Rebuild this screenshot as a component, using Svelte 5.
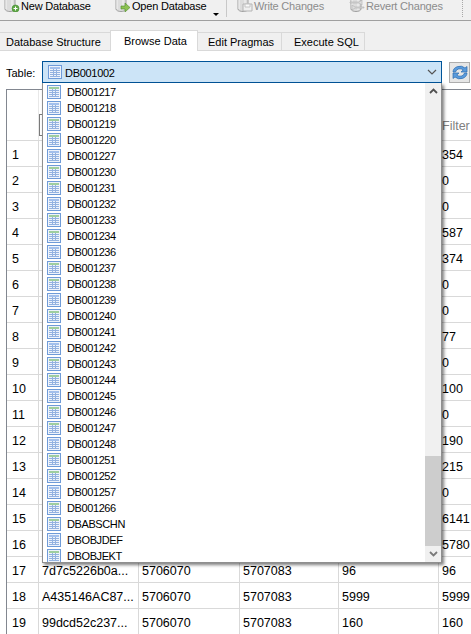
<script>
  const tables = ['DB001217','DB001218','DB001219','DB001220','DB001227','DB001230','DB001231','DB001232','DB001233','DB001234','DB001236','DB001237','DB001238','DB001239','DB001240','DB001241','DB001242','DB001243','DB001244','DB001245','DB001246','DB001247','DB001248','DB001251','DB001252','DB001257','DB001266','DBABSCHN','DBOBJDEF','DBOBJEKT'];
  const lastCol = ['354','0','0','587','374','0','0','77','0','100','0','190','215','0','6141','5780','96','5999','160'];
  const rows = lastCol.map((v, i) => {
    const tail = { 16: ['7d7c5226b0a...', '96'], 17: ['A435146AC87...', '5999'], 18: ['99dcd52c237...', '160'] }[i];
    return { n: i + 1, hash: tail ? tail[0] : '', a: tail ? '5706070' : '', b: tail ? '5707083' : '', c: tail ? tail[1] : '', d: v };
  });
  const tabs = ['Database Structure', 'Browse Data', 'Edit Pragmas', 'Execute SQL'];
</script>

{#snippet tableIcon(green)}
  <svg class="ticon" width="16" height="16" viewBox="0 0 16 16">
    <rect x="1.5" y="1.5" width="13" height="13" fill="#eef3fb" stroke="#6f9bd8"/>
    <rect x="3" y="3" width="10" height="2" fill={green ? '#9fce9f' : '#a3c0ec'}/>
    <path d="M3 6.500h10M3 8.500h10M3 10.500h10M3 12.500h10M6.500 5v8M9.500 5v8" stroke="#93b2e0" fill="none"/>
  </svg>
{/snippet}

{#snippet dbBody(x)}
  <path d="M{x} 3v10c0 1.500 2.500 2.500 5 2.500s5-1 5-2.500V3z" fill="#dcdcdc" stroke="#a0a0a0"/>
  <path d="M{x + 1} 4v9M{x + 7} 4v10" stroke="#f4f4f4"/>
{/snippet}

<div class="app">
  <div class="toolbar">
    <div class="tool new">
      <svg width="16" height="16" viewBox="0 0 16 16">
        {@render dbBody(1)}
        <circle cx="11.500" cy="12.500" r="3.500" fill="#5fa845" stroke="#3f8a2c" stroke-width=".6"/>
        <path d="M9.500 12.500h4M11.500 10.500v4" stroke="#fff"/>
      </svg>
      <span>New Database</span>
    </div>
    <div class="tool open">
      <svg width="16" height="16" viewBox="0 0 16 16">
        {@render dbBody(1)}
        <path d="M6 10h4V7l5 4.500L10 16v-3H6z" fill="#8cc152" stroke="#4f8a2c" stroke-width=".6"/>
      </svg>
      <span>Open Database</span>
      <i class="caret"></i>
    </div>
    <div class="sep"></div>
    <div class="tool off write">
      <svg width="16" height="16" viewBox="0 0 16 16">
        {@render dbBody(1)}
        <path d="M6 8h9v7H6z" fill="#efefef" stroke="#b4b4b4"/>
        <path d="M8 8h5v3H8z" fill="#fafafa" stroke="#c4c4c4"/>
      </svg>
      <span>Write Changes</span>
    </div>
    <div class="tool off revert">
      <svg width="16" height="16" viewBox="0 0 16 16">
        {@render dbBody(2)}
        <path d="M1 6h9l3-2v5l-3-2H1zM15 11H6l-3-2v5l3-2h9z" fill="#dedede" stroke="#b0b0b0" stroke-width=".6"/>
      </svg>
      <span>Revert Changes</span>
    </div>
    <div class="grip"></div>
  </div>

  <div class="tabs">
    {#each tabs as tab, i}
      <div class="tab" class:active={i === 1}>{tab}</div>
    {/each}
  </div>

  <div class="page">
    <div class="table-row">
      <span class="label">Table:</span>
      <div class="combo-wrap">
        <div class="combo">
          {@render tableIcon(false)}
          <span class="combo-text">DB001002</span>
          <svg class="chev" width="10" height="6" viewBox="0 0 10 6"><path d="M1 1l4 4 4-4" fill="none" stroke="#555" stroke-width="1.200"/></svg>
        </div>
        <div class="popup">
          <div class="list">
            {#each tables as t, i}
              <div class="item">
                {@render tableIcon(i % 3 !== 1)}
                <span>{t}</span>
              </div>
            {/each}
          </div>
          <div class="scroll">
            <svg class="arrow" width="9" height="6" viewBox="0 0 9 6"><path d="M1 5l3.500-3.500L8 5" fill="none" stroke="#505050" stroke-width="1.800"/></svg>
            <div class="track"><div class="thumb"></div></div>
            <svg class="arrow" width="9" height="6" viewBox="0 0 9 6"><path d="M1 1l3.500 3.500L8 1" fill="none" stroke="#7a7a7a" stroke-width="1.800"/></svg>
          </div>
        </div>
      </div>
      <button class="refresh" aria-label="Refresh">
        <svg width="18" height="19" viewBox="0 0 18 19">
          <path d="M2 9a7 6 0 0 1 12-4l2-1.500V9h-6l2.200-2A4.500 4 0 0 0 4.500 9z" fill="#5b9bdc" stroke="#2b6cb0" stroke-width=".7"/>
          <path d="M16 10a7 6 0 0 1-12 4l-2 1.500V10h6l-2.200 2a4.500 4 0 0 0 7.700-2z" fill="#5b9bdc" stroke="#2b6cb0" stroke-width=".7"/>
        </svg>
      </button>
    </div>

    <div class="grid-frame">
      <div class="head">
        <div class="corner"></div>
        <div class="hcell"><div class="filter-box"></div></div>
        <div class="hcell"></div>
        <div class="hcell"></div>
        <div class="hcell"></div>
        <div class="hcell last"><span class="filter">Filter</span></div>
      </div>
      {#each rows as r}
        <div class="row">
          <div class="num">{r.n}</div>
          <div class="cell">{r.hash}</div>
          <div class="cell">{r.a}</div>
          <div class="cell">{r.b}</div>
          <div class="cell">{r.c}</div>
          <div class="cell">{r.d}</div>
        </div>
      {/each}
    </div>
  </div>
</div>

<style>
  :global(body) {
    margin: 0;
    background: #fff;
    overflow: hidden;
  }
  .app {
    width: 471px;
    height: 634px;
    overflow: hidden;
    font-family: "Liberation Sans", Arial, sans-serif;
    font-size: 11px;
    color: #000;
    background: #fff;
  }
  .toolbar {
    height: 20px;
    display: flex;
    align-items: flex-start;
    overflow: hidden;
    background: #f0f0f0;
    border-bottom: 1px solid #a0a0a0;
    padding-left: 4px;
    box-sizing: content-box;
  }
  .tool {
    display: flex;
    align-items: flex-start;
    gap: 1px;
    height: 20px;
    white-space: nowrap;
    letter-spacing: -0.200px;
  }
  .tool svg {
    margin-top: -4px;
    flex: none;
  }
  .tool span {
    line-height: 12px;
  }
  .new {
    width: 111px;
  }
  .open {
    width: 111px;
  }
  .write {
    width: 112px;
  }
  .revert {
    width: 110px;
  }
  .caret {
    width: 0;
    height: 0;
    border: 3px solid transparent;
    border-top: 3px solid #000;
    border-bottom: 0;
    margin: 13px 0 0 6px;
  }
  .sep {
    width: 1px;
    height: 17px;
    background: #c8c8c8;
    margin-right: 10px;
  }
  .off {
    color: #8c8c8c;
  }
  .grip {
    height: 17px;
    border-left: 1px dotted #a8a8a8;
    margin-left: 3px;
  }
  .tabs {
    display: flex;
    align-items: flex-end;
    height: 29px;
    background: #f0f0f0;
    border-bottom: 1px solid #d9d9d9;
    box-sizing: content-box;
  }
  .tab {
    height: 17px;
    line-height: 18px;
    border: 1px solid #d9d9d9;
    border-width: 1px 1px 0 0;
    white-space: nowrap;
    box-sizing: content-box;
  }
  .tab:nth-child(1) {
    width: 104px;
    padding-left: 6px;
  }
  .tab.active {
    width: 73px;
    height: 20px;
    line-height: 20px;
    padding-left: 13px;
    background: #fff;
    margin-bottom: -1px;
    border-left: 1px solid #d9d9d9;
    margin-left: -1px;
  }
  .tab:nth-child(3) {
    width: 73px;
    padding-left: 10px;
  }
  .tab:nth-child(4) {
    width: 70px;
    padding-left: 12px;
  }
  .page {
    padding: 10px 0 0 6px;
  }
  .table-row {
    display: flex;
    align-items: center;
    height: 22px;
    position: relative;
    z-index: 2;
  }
  .label {
    width: 36px;
    padding-top: 2px;
  }
  .combo-wrap {
    position: relative;
    width: 400px;
    height: 22px;
  }
  .combo {
    display: flex;
    align-items: center;
    height: 22px;
    box-sizing: border-box;
    background: #cce4f7;
    border: 1px solid #005499;
    padding-left: 4px;
  }
  .combo-text {
    margin-left: 2px;
    letter-spacing: -0.300px;
    padding-top: 1px;
  }
  .chev {
    margin-left: auto;
    margin-right: 4px;
  }
  .ticon {
    flex: none;
  }
  .popup {
    position: absolute;
    left: 0;
    top: 22px;
    width: 400px;
    height: 480px;
    background: #fff;
    display: flex;
    border: solid #8f8f8f;
    border-width: 0 1px 1px 1px;
    box-sizing: border-box;
    box-shadow: 2px 2px 3px rgba(0, 0, 0, 0.5);
  }
  .list {
    flex: 1;
    overflow: hidden;
    padding-top: 1px;
  }
  .item {
    display: flex;
    align-items: center;
    height: 16px;
    padding-left: 3px;
    letter-spacing: -0.400px;
    gap: 5px;
  }
  .scroll {
    width: 16px;
    display: flex;
    flex-direction: column;
    align-items: center;
    background: #f0f0f0;
  }
  .arrow {
    flex: none;
    margin: 5px 0;
  }
  .track {
    flex: 1;
    width: 100%;
    display: flex;
    flex-direction: column;
    justify-content: flex-end;
  }
  .thumb {
    height: 90px;
    background: #cdcdcd;
  }
  .refresh {
    width: 21px;
    height: 21px;
    margin-left: 7px;
    padding: 0;
    display: flex;
    align-items: center;
    justify-content: center;
    background: #e6e6e6;
    border: 1px solid #adadad;
    box-sizing: border-box;
  }
  .grid-frame {
    margin-top: 6px;
    border: solid #828790;
    border-width: 1px 0 0 1px;
  }
  .head,
  .row {
    display: grid;
    grid-template-columns: 32px 100px 101px 99px 100px 40px;
  }
  .head {
    height: 50px;
    border-bottom: 1px solid #d9d9d9;
  }
  .corner,
  .hcell {
    border-right: 1px solid #e8e8e8;
    position: relative;
  }
  .last {
    border-right: 0;
  }
  .filter-box {
    position: absolute;
    left: 0;
    top: 24px;
    width: 20px;
    height: 20px;
    border: 1px solid #7a7a7a;
  }
  .filter {
    position: absolute;
    left: 3px;
    top: 29px;
    color: #808080;
    font-size: 12.500px;
  }
  .row {
    height: 26px;
    box-sizing: border-box;
    border-bottom: 1px solid #d9d9d9;
    line-height: 28px;
    font-size: 12.500px;
  }
  .num {
    padding-left: 5px;
    border-right: 1px solid #d9d9d9;
  }
  .cell {
    padding-left: 3px;
    border-right: 1px solid #d9d9d9;
    white-space: nowrap;
    overflow: hidden;
  }
  .cell:last-child {
    border-right: 0;
  }
</style>
